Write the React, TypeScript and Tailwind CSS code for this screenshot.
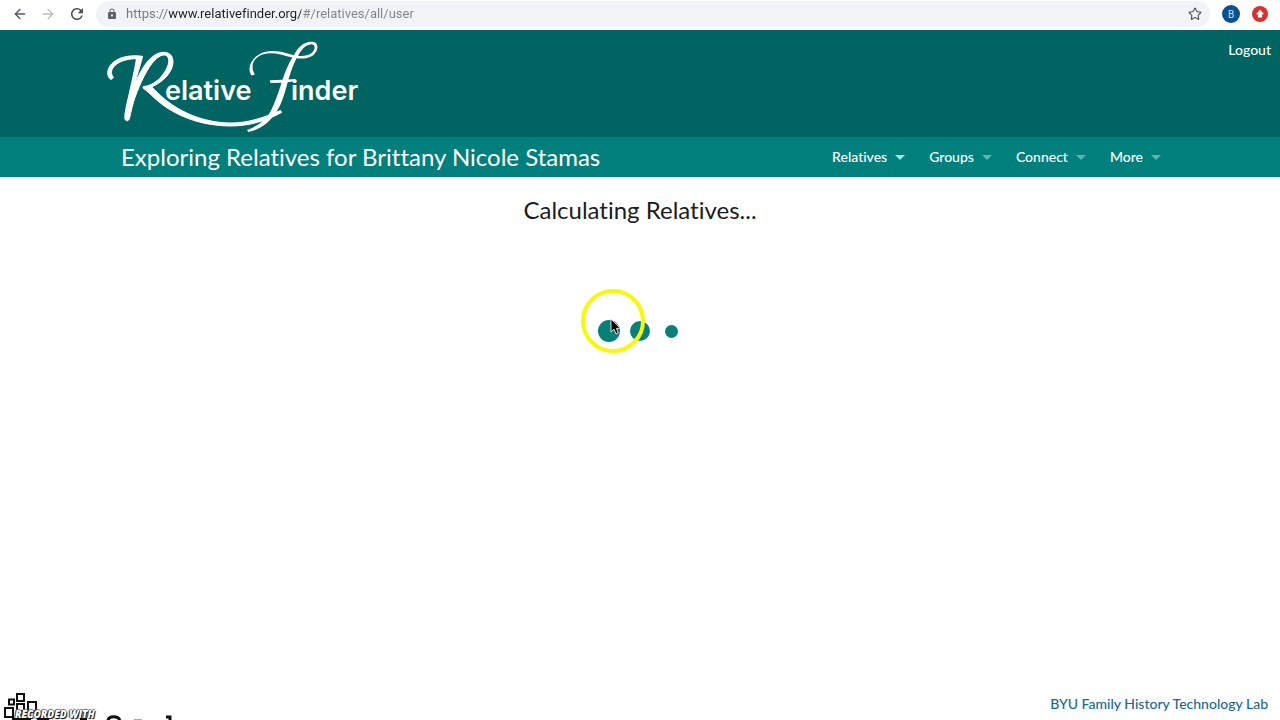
import { ArrowLeft, ArrowRight, Star } from 'lucide-react';
import { MdLock, MdRefresh } from 'react-icons/md';

const menus = [
  { label: 'Relatives', caret: 'border-t-[#a5e3e3]' },
  { label: 'Groups', caret: 'border-t-[#5fb3b2]' },
  { label: 'Connect', caret: 'border-t-[#5fb3b2]' },
  { label: 'More', caret: 'border-t-[#5fb3b2]' },
];

function BrowserBar() {
  return (
    <div className="flex h-[30px] items-center bg-white pb-0.5 pr-3">
      <div className="flex w-24 shrink-0 items-center justify-between pl-3 pr-2.5">
        <button aria-label="Back" className="text-[#55585c]">
          <ArrowLeft className="size-4" strokeWidth={2} />
        </button>
        <button aria-label="Forward" className="text-[#b9bbbe]">
          <ArrowRight className="size-4" strokeWidth={2} />
        </button>
        <button aria-label="Reload" className="text-[#4a4d51]">
          <MdRefresh className="size-[18px]" />
        </button>
      </div>
      <div className="flex h-[26px] flex-1 items-center rounded-full bg-[#f1f3f6] pl-2.5 pr-2">
        <MdLock className="size-3 shrink-0 text-[#5f6368]" />
        <input
          aria-label="Address"
          readOnly
          value="https://www.relativefinder.org/#/relatives/all/user"
          className="ml-2 min-w-0 flex-1 bg-[linear-gradient(to_right,#74777b_43px,#202124_43px,#202124_175px,#808387_175px)] bg-clip-text font-[Roboto,sans-serif] text-[13px] text-transparent outline-none"
        />
        <button aria-label="Bookmark this page" className="text-[#55585c]">
          <Star className="size-3.5" strokeWidth={2} />
        </button>
      </div>
      <button aria-label="Profile" className="ml-3 flex size-[18px] items-center justify-center rounded-full bg-[#0b4f8f] font-[Roboto,sans-serif] text-[10px] text-[#c8e0f5]">
        B
      </button>
      <button aria-label="Update" className="ml-3 flex size-4 items-center justify-center rounded-full bg-[#d93030]">
        <svg viewBox="0 0 16 16" className="size-4" fill="#fff">
          <path d="M8 3.6 12 8.2h-1.9v3.2H5.9V8.2H4z" />
        </svg>
      </button>
    </div>
  );
}

function Logo() {
  return (
    <svg viewBox="104 38 260 98" className="h-[98px] w-[260px]" fill="#fff" role="img" aria-label="Relative Finder">
      {/* left flourish and stem */}
      <path d="M111 79.500C106.500 77 106.600 69 111.500 64C118 57 130 54.500 142.500 56.300C141.500 62 138 72 134.500 84C140 72 146 61.500 153 56.200C159 51.600 168 50.500 171.500 56C175.500 63 171 73 163.500 79.500C159 83.300 155 85.500 151.500 86.800C157 92 163 98.500 171 104C187 115 207 122.500 229 123C248 123.500 265 117 280.500 110.500L281.500 112.500C267 120.500 249 126.300 229 126C204 125.600 184 118.500 168 108.500C157 101.500 151 94 143 88L143.200 86.600C149 86.200 155 83 159.500 78.500C166 72 171 62 167.800 57C165 53 159.500 55.500 155 60C147 68 140 84 135.500 96C132.500 104 131 112 129.500 118.500C128.500 121.500 125.500 121.500 124.800 118.500C124.500 113 126.500 106 128 99C131 85.500 134.500 71 136.500 58.800C128 58.500 119 61 114 66.500C110.500 70.500 111 74.500 113.500 77.500Z" stroke="#fff" strokeWidth="1" />
      {/* right flourish */}
      <path d="M251.500 75.500C247.500 70 249.500 61.500 257 55.800C265 49.800 276 50.300 285 52.800C288 53.600 291 54.600 294 55.200C297.500 47.500 303.500 42 311 41.700C317 41.500 319 46 316.500 51C313.500 57.500 305 59.500 296.500 58.200C293 65 290.500 72.500 288.500 79.500L295 79L295.500 81L287.700 82.200C285 92 282.500 102 277.500 110C270 122.500 260.500 129.500 248.500 132L247 130C257 126.500 265.500 120.500 271 110.500C275.500 102 278.500 92 281.500 82.800L270.500 83L269.800 80.200L282.500 79.700C285.500 70.500 289 63 292.300 57.500C288 56.700 284 55.200 279.500 54.200C271 52.300 262.500 52.800 256.500 58C251.500 62.500 251.500 69 254.800 74.500ZM298 55.700C305 56.600 311.500 55 314 50C315.500 46.500 314 44 310.500 44.400C305 45 301 50 298 55.700Z" />
      <text x="165" y="100" className="font-[Inter,sans-serif] text-[27px] font-semibold">elative</text>
      <text x="291" y="100" className="font-[Inter,sans-serif] text-[27px] font-semibold">inder</text>
    </svg>
  );
}

function Loader() {
  return (
    <div className="relative mx-auto mt-[94px] grid w-[93px] grid-cols-3 place-items-center" role="status" aria-label="Loading">
      <span className="size-[22px] rounded-full bg-[#098077]" />
      <span className="size-5 rounded-full bg-[#098077]" />
      <span className="size-[13px] rounded-full bg-[#098077]" />
      {/* highlighted pointer */}
      <span className="absolute -left-[13px] -top-[31px] size-16 rounded-full border-4 border-[#f8f80c]" />
      <svg viewBox="0 0 12 18" className="absolute left-4 -top-0.5 h-[18px] w-3">
        <path d="M1 1v13l3-2.800 2 4.800 2.400-1-2-4.700h4z" fill="#000" stroke="#ddd" strokeWidth="1" />
      </svg>
    </div>
  );
}

function Watermark() {
  return (
    <div className="pointer-events-none absolute bottom-0 left-0 h-7 w-52 overflow-hidden">
      <svg viewBox="0 0 208 28" className="absolute inset-0 h-7 w-52" fill="#fff" stroke="#111" strokeWidth="2">
        <path d="M17 2h7v7h-7zM9 7.500h5v5H9zM17 12h7v7h-7zM28 10h8v9h-8zM5 16h8v9H5z" />
        <path d="M108 28C109 23.500 118 23.500 120 28M166 25h4v4" fill="none" strokeWidth="3" />
        <path d="M134 27.500h8" stroke="#8cb4c8" strokeWidth="1" />
        <path d="M12 27h19M37 27h12M80 27h7" strokeWidth="2" />
      </svg>
      <span className="absolute left-[15px] top-4 whitespace-nowrap font-['Open_Sans',sans-serif] text-[10px] font-extrabold italic leading-3 text-white [text-shadow:1px_1px_1px_#000,-1px_0_1px_#333,0_-1px_1px_#777]">
        RECORDED WITH
      </span>
    </div>
  );
}

export default function App() {
  return (
    <div className="relative flex min-h-screen flex-col bg-white font-[Lato,sans-serif] [font-variant-ligatures:none]">
      <BrowserBar />

      <header className="text-white">
        <div className="flex h-[107px] items-start justify-between bg-[#006562] pl-[104px] pr-[9px] pt-2">
          <Logo />
          <a href="#/logout" className="pt-0.5 text-sm font-medium">Logout</a>
        </div>
        <div className="bg-[#007f7d]">
          <div className="mx-auto flex h-10 max-w-[1066px] items-center justify-between pl-3.5 pr-3">
            <h1 className="text-2xl">Exploring Relatives for Brittany Nicole Stamas</h1>
            <nav className="flex gap-6">
              {menus.map((menu) => (
                <button key={menu.label} className="flex items-center gap-2 text-sm font-medium">
                  {menu.label}
                  <span className={`border-x-[5px] border-t-[5px] border-x-transparent ${menu.caret}`} />
                </button>
              ))}
            </nav>
          </div>
        </div>
      </header>

      <main className="flex-1 pt-[17px]">
        <h2 className="text-center text-2xl text-[#1c1c1c]">Calculating Relatives...</h2>
        <Loader />
      </main>

      <footer className="flex justify-end pb-1.5 pr-3">
        <a href="#/lab" className="text-sm font-medium text-[#1a6a90]">BYU Family History Technology Lab</a>
      </footer>
      <Watermark />
    </div>
  );
}
